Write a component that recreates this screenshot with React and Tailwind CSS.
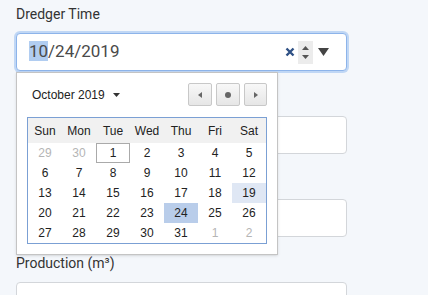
import { useState } from "react";

const weeks = [
    [29, 30, 1, 2, 3, 4, 5],
    [6, 7, 8, 9, 10, 11, 12],
    [13, 14, 15, 16, 17, 18, 19],
    [20, 21, 22, 23, 24, 25, 26],
    [27, 28, 29, 30, 31, 1, 2],
];
const days = ["Sun", "Mon", "Tue", "Wed", "Thu", "Fri", "Sat"];

function dayClass(w, n) {
    const other = (w === 0 && n > 20) || (w === 4 && n < 10);
    if (other) return "text-[#b5b5b5]";
    if (n === 24) return "bg-[#b9cdea] text-[#222]";
    if (n === 19) return "bg-[#dfe7f4] text-[#222]";
    if (w === 0 && n === 1) return "border border-[#aaa] text-[#222]";
    return "text-[#222]";
}

function Calendar() {
    return (
        <div className="absolute left-0 top-[39px] z-10 w-[262px] border border-[#c4c4c4] bg-white p-[10px] shadow-sm font-['Liberation_Sans',Arial,sans-serif]">
            <div className="mb-[11px] flex h-[23px] items-center justify-between">
                <div className="flex items-center gap-2 pl-[5px] text-[12px] text-[#222]">
                    October 2019
                    <svg width="7" height="4" viewBox="0 0 7 4">
                        <path d="M0 0h7L3.5 4z" fill="#333" />
                    </svg>
                </div>
                <div className="flex gap-[4px]">
                    <button className="flex h-[23px] w-[24px] items-center justify-center rounded-[2px] border border-[#c8c8c8] bg-gradient-to-b from-[#f8f8f8] to-[#e6e6e6]">
                        <svg width="4" height="6" viewBox="0 0 4 6">
                            <path d="M4 0v6L0 3z" fill="#666" />
                        </svg>
                    </button>
                    <button className="flex h-[23px] w-[24px] items-center justify-center rounded-[2px] border border-[#c8c8c8] bg-gradient-to-b from-[#f8f8f8] to-[#e6e6e6]">
                        <span className="h-[6px] w-[6px] rounded-full bg-[#666]" />
                    </button>
                    <button className="flex h-[23px] w-[23px] items-center justify-center rounded-[2px] border border-[#c8c8c8] bg-gradient-to-b from-[#f8f8f8] to-[#e6e6e6]">
                        <svg width="4" height="6" viewBox="0 0 4 6">
                            <path d="M0 0v6L4 3z" fill="#666" />
                        </svg>
                    </button>
                </div>
            </div>
            <div className="w-[240px] border border-[#7ba0d4] text-[12px]">
                <div className="grid h-[25px] grid-cols-7 items-center bg-[#f1f1f1] text-center text-[#222]">
                    {days.map((d) => (
                        <div key={d}>{d}</div>
                    ))}
                </div>
                {weeks.map((week, w) => (
                    <div key={w} className="grid grid-cols-7">
                        {week.map((n, i) => (
                            <div
                                key={i}
                                className={`flex h-[20px] items-center justify-center ${dayClass(w, n)}`}
                            >
                                {n}
                            </div>
                        ))}
                    </div>
                ))}
            </div>
        </div>
    );
}

function Field({ label, children }) {
    return (
        <div className="mb-[16px]">
            <div className="mb-[9px] h-[20px] text-[14px] leading-[20px] text-[#333]">
                {label}
            </div>
            {children}
        </div>
    );
}

export default function App() {
    const [open] = useState(true);

    return (
        <div className="h-[295px] overflow-hidden bg-[#f4f7fb] pl-4 pt-[4px] font-['Roboto',sans-serif]">
            <Field label="Dredger Time">
                <div className="relative w-[331px]">
                    <div className="flex h-[38px] items-center rounded-[4px] border border-[#8db4ea] bg-white pl-[12px] pr-[17px] shadow-[0_0_0_2px_rgba(150,190,240,0.55)]">
                        <div className="flex-1 text-[17px] text-[#4a4a4a]">
                            <span className="bg-[#b1cdf1]">10</span>/24/2019
                        </div>
                        <svg width="10" height="10" viewBox="0 0 10 10" className="mr-[3px]">
                            <path d="M1.5 1.5l7 7M8.5 1.5l-7 7" stroke="#2f5185" strokeWidth="2.4" />
                        </svg>
                        <div className="flex h-[23px] w-[15px] flex-col items-center justify-center gap-[5px] bg-[#ececec]">
                            <svg width="7" height="4" viewBox="0 0 7 4">
                                <path d="M0 4h7L3.5 0z" fill="#555" />
                            </svg>
                            <svg width="7" height="4" viewBox="0 0 7 4">
                                <path d="M0 0h7L3.5 4z" fill="#555" />
                            </svg>
                        </div>
                        <svg width="11" height="8" viewBox="0 0 11 8" className="ml-[5px]">
                            <path d="M0 0h11L5.5 8z" fill="#444" />
                        </svg>
                    </div>
                    {open && <Calendar />}
                </div>
            </Field>
            {/* labels of these two fields sit under the open calendar */}
            <Field label="">
                <div className="h-[38px] w-[331px] rounded-[4px] border border-[#d3d6da] bg-white" />
            </Field>
            <Field label="">
                <div className="h-[38px] w-[331px] rounded-[4px] border border-[#d3d6da] bg-white" />
            </Field>
            <Field label="Production (m³)">
                <div className="h-[38px] w-[331px] rounded-[4px] border border-[#d3d6da] bg-white" />
            </Field>
        </div>
    );
}
